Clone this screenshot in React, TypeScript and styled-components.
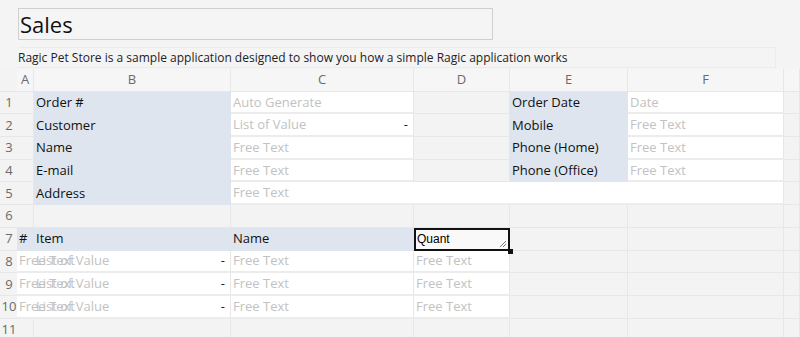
import styled, { createGlobalStyle } from "styled-components";

const GlobalStyle = createGlobalStyle`
  html, body {
    margin: 0;
    padding: 0;
    background: #f4f4f4;
    font-family: "Open Sans", "DejaVu Sans", sans-serif;
  }
`;

const Page = styled.div`
  width: 800px;
  height: 337px;
  overflow: hidden;
  background: #f4f4f4;
`;

const Top = styled.div`
  padding: 8px 0 0 18px;
  display: flex;
  flex-direction: column;
  gap: 7px;
`;

const TitleBox = styled.div`
  width: 472px;
  height: 30px;
  border: 1px solid #cfcfcf;
  background: #f5f5f5;
  font-size: 22px;
  line-height: 30px;
  padding-left: 1px;
  color: #111;
  box-sizing: content-box;
`;

const Desc = styled.div`
  width: 757px;
  height: 19px;
  border: 1px solid #ececec;
  border-left: none;
  font-size: 12px;
  line-height: 19px;
  color: #222;
`;

const Sheet = styled.div`
  margin-top: 1px;
  display: grid;
  grid-template-columns: 17px 17px 197px 183px 96px 118px 156px 16px;
  grid-auto-rows: 22.7px;
`;

type Kind = "head" | "num" | "empty" | "label" | "value" | "edit";

const Cell = styled.div<{ $kind: Kind; $span?: number }>`
  grid-column: span ${(p) => p.$span || 1};
  box-sizing: border-box;
  border-right: 1px solid #e7e7e7;
  border-bottom: 1px solid #e7e7e7;
  font-size: 13px;
  line-height: 21px;
  white-space: nowrap;
  overflow: hidden;
  display: flex;
  align-items: center;
  padding: 0 2px;
  background: ${(p) =>
    p.$kind === "label"
      ? "#dfe5ee"
      : p.$kind === "value"
      ? "#ffffff"
      : p.$kind === "head"
      ? "#f6f6f6"
      : "#f3f3f3"};
  color: ${(p) =>
    p.$kind === "value" ? "#c2c2c2" : p.$kind === "head" || p.$kind === "num" ? "#6a6a6a" : "#111"};
  justify-content: ${(p) => (p.$kind === "head" ? "center" : "flex-start")};
  ${(p) => p.$kind === "label" && "border-color: #dfe5ee; border-right-color: #dfe5ee;"}
  ${(p) => p.$kind === "value" && "border-bottom: 2px solid #ececec;"}
  ${(p) => p.$kind === "num" && "padding: 0 0 0 1px; justify-content: center; border-right: none;"}
`;

const Dash = styled.span`
  margin-left: auto;
  padding-right: 3px;
  color: #222;
`;

/* the A column value spills under the B column list field, as in the app */
const Stack = styled.div`
  display: grid;
  & > span {
    grid-area: 1 / 1;
  }
  & > span + span {
    padding-left: 17px;
  }
`;

const EditCell = styled.div`
  position: relative;
  box-sizing: border-box;
  border: 2px solid #111;
  background: #f9f9f9;
  font-family: "Liberation Sans", Arial, sans-serif;
  font-size: 12px;
  color: #000;
  display: flex;
  align-items: center;
  padding-left: 1px;
`;

const Grip = styled.svg`
  position: absolute;
  right: 1px;
  bottom: 1px;
`;

const Handle = styled.div`
  position: absolute;
  right: -5px;
  bottom: -5px;
  width: 5px;
  height: 5px;
  background: #111;
`;

type C = { k: Kind; t?: string; s?: number; dash?: boolean; stack?: boolean };

const e = (s = 1): C => ({ k: "empty", s });
const L = (t: string, s = 1): C => ({ k: "label", t, s });
const V = (t: string, s = 1, dash = false): C => ({ k: "value", t, s, dash });
const item = (): C => ({ k: "value", s: 2, dash: true, stack: true });

const rows: C[][] = [
  [e(), L("Order #"), V("Auto Generate"), e(), L("Order Date"), V("Date"), e()],
  [e(), L("Customer"), V("List of Value", 1, true), e(), L("Mobile"), V("Free Text"), e()],
  [e(), L("Name"), V("Free Text"), e(), L("Phone (Home)"), V("Free Text"), e()],
  [e(), L("E-mail"), V("Free Text"), e(), L("Phone (Office)"), V("Free Text"), e()],
  [e(), L("Address"), V("Free Text", 4), e()],
  [e(), e(), e(), e(), e(), e(), e()],
  [L("#"), L("Item"), L("Name"), { k: "edit", t: "Quant" }, e(), e(), e()],
  [item(), V("Free Text"), V("Free Text"), e(), e(), e()],
  [item(), V("Free Text"), V("Free Text"), e(), e(), e()],
  [item(), V("Free Text"), V("Free Text"), e(), e(), e()],
  [e(), e(), e(), e(), e(), e(), e()],
];

const heads = ["A", "B", "C", "D", "E", "F", ""];

export default function App() {
  return (
    <Page>
      <GlobalStyle />
      <Top>
        <TitleBox>Sales</TitleBox>
        <Desc>Ragic Pet Store is a sample application designed to show you how a simple Ragic application works</Desc>
      </Top>
      <Sheet>
        <Cell $kind="num" />
        {heads.map((h, i) => (
          <Cell key={i} $kind="head">
            {h}
          </Cell>
        ))}
        {rows.map((row, r) => [
          <Cell key={`n${r}`} $kind="num">
            {r + 1}
          </Cell>,
          ...row.map((c, i) =>
            c.k === "edit" ? (
              <EditCell key={`${r}-${i}`}>
                {c.t}
                <Grip width="8" height="8" viewBox="0 0 8 8">
                  <path d="M1 7 L7 1 M4 7 L7 4" stroke="#777" strokeWidth="1" />
                </Grip>
                <Handle />
              </EditCell>
            ) : (
              <Cell key={`${r}-${i}`} $kind={c.k} $span={c.s}>
                {c.stack ? (
                  <Stack>
                    <span>Free Text</span>
                    <span>List of Value</span>
                  </Stack>
                ) : (
                  c.t
                )}
                {c.dash && <Dash>-</Dash>}
              </Cell>
            )
          ),
        ])}
      </Sheet>
    </Page>
  );
}
